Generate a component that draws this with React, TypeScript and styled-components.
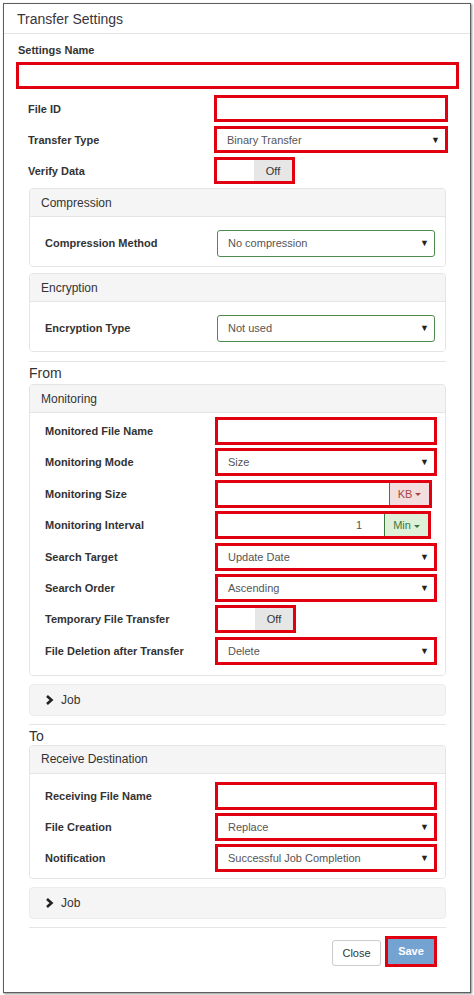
import React from 'react';
import styled, { createGlobalStyle } from 'styled-components';

const RED = '#e0000f';

const GlobalStyle = createGlobalStyle`
  html, body {
    margin: 0;
    padding: 0;
    background: #fff;
  }
  body {
    font-family: 'Liberation Sans', Arial, sans-serif;
    color: #333;
  }
  * {
    box-sizing: border-box;
  }
`;

const Caret: React.FC = () => <CaretShape />;

const Chevron: React.FC = () => (
  <svg width="9" height="10" viewBox="0 0 9 10">
    <polyline points="2,1 6.5,5 2,9" fill="none" stroke="#222" strokeWidth="2.6" />
  </svg>
);

const Select: React.FC<{ value: string }> = ({ value }) => (
  <SelectBox>
    <span>{value}</span>
    <Arrow>▼</Arrow>
  </SelectBox>
);

const Toggle: React.FC = () => (
  <Highlight $width={81}>
    <ToggleBlank />
    <ToggleOff>Off</ToggleOff>
  </Highlight>
);

const App: React.FC = () => {
  return (
    <>
      <GlobalStyle />
      <Frame>
        <Header>Transfer Settings</Header>
        <Body>
          <NameBlock>
            <NameLabel>Settings Name</NameLabel>
            <Highlight $height={27} />
          </NameBlock>

          <TopRows>
            <Row $label={186} $height={27}>
              <Label>File ID</Label>
              <Highlight />
            </Row>
            <Row $label={186} $height={27}>
              <Label>Transfer Type</Label>
              <Highlight>
                <Select value="Binary Transfer" />
              </Highlight>
            </Row>
            <Row $label={186} $height={27}>
              <Label>Verify Data</Label>
              <Toggle />
            </Row>
          </TopRows>

          <Sections>
            <Panel>
              <PanelHeader>Compression</PanelHeader>
              <PanelBody $top={12} $bottom={9}>
                <Row $label={170}>
                  <Label>Compression Method</Label>
                  <GreenSelect>
                    <Select value="No compression" />
                  </GreenSelect>
                </Row>
              </PanelBody>
            </Panel>

            <Panel>
              <PanelHeader>Encryption</PanelHeader>
              <PanelBody $top={12} $bottom={9}>
                <Row $label={170}>
                  <Label>Encryption Type</Label>
                  <GreenSelect>
                    <Select value="Not used" />
                  </GreenSelect>
                </Row>
              </PanelBody>
            </Panel>

            <Divider $top={3} />
            <SectionTitle $top={3} $bottom={3}>From</SectionTitle>

            <Panel $gap={8}>
              <PanelHeader>Monitoring</PanelHeader>
              <PanelBody $top={4} $bottom={10} $rowGap={3.4}>
                <Row $label={170}>
                  <Label>Monitored File Name</Label>
                  <Highlight />
                </Row>
                <Row $label={170}>
                  <Label>Monitoring Mode</Label>
                  <Highlight>
                    <Select value="Size" />
                  </Highlight>
                </Row>
                <Row $label={170}>
                  <Label>Monitoring Size</Label>
                  <Highlight $width={217}>
                    <TextValue />
                    <Addon $tone="danger" $width={40}>
                      KB <Caret />
                    </Addon>
                  </Highlight>
                </Row>
                <Row $label={170}>
                  <Label>Monitoring Interval</Label>
                  <Highlight $width={216}>
                    <TextValue>1</TextValue>
                    <Addon $tone="success" $width={44}>
                      Min <Caret />
                    </Addon>
                  </Highlight>
                </Row>
                <Row $label={170}>
                  <Label>Search Target</Label>
                  <Highlight>
                    <Select value="Update Date" />
                  </Highlight>
                </Row>
                <Row $label={170}>
                  <Label>Search Order</Label>
                  <Highlight>
                    <Select value="Ascending" />
                  </Highlight>
                </Row>
                <Row $label={170}>
                  <Label>Temporary File Transfer</Label>
                  <Toggle />
                </Row>
                <Row $label={170}>
                  <Label>File Deletion after Transfer</Label>
                  <Highlight>
                    <Select value="Delete" />
                  </Highlight>
                </Row>
              </PanelBody>
            </Panel>

            <JobBar>
              <Chevron />
              <span>Job</span>
            </JobBar>

            <Divider $top={0} />
            <SectionTitle $top={3} $bottom={1}>To</SectionTitle>

            <Panel $gap={8}>
              <PanelHeader>Receive Destination</PanelHeader>
              <PanelBody $top={8} $bottom={6} $rowGap={3}>
                <Row $label={170}>
                  <Label>Receiving File Name</Label>
                  <Highlight />
                </Row>
                <Row $label={170}>
                  <Label>File Creation</Label>
                  <Highlight>
                    <Select value="Replace" />
                  </Highlight>
                </Row>
                <Row $label={170}>
                  <Label>Notification</Label>
                  <Highlight>
                    <Select value="Successful Job Completion" />
                  </Highlight>
                </Row>
              </PanelBody>
            </Panel>

            <JobBar>
              <Chevron />
              <span>Job</span>
            </JobBar>

            <Divider $top={0} />

            <Footer>
              <CloseButton type="button">Close</CloseButton>
              <Highlight $width={52} $height={31}>
                <SaveButton type="button">Save</SaveButton>
              </Highlight>
            </Footer>
          </Sections>
        </Body>
      </Frame>
    </>
  );
};

export default App;

const Frame = styled.div`
  margin: 3px;
  width: 468px;
  height: 990px;
  border: 1px solid #5e5e5e;
  box-shadow: 1px 1px 2px rgba(0, 0, 0, 0.45);
  background: #fff;
  display: flex;
  flex-direction: column;
`;

const Header = styled.div`
  height: 30px;
  padding: 0 13px;
  display: flex;
  align-items: center;
  border-bottom: 1px solid #e5e5e5;
  font-size: 14px;
  color: #3a3440;
`;

const Body = styled.div`
  padding-top: 9px;
`;

const NameBlock = styled.div`
  padding: 0 11px 0 12px;
`;

const NameLabel = styled.div`
  padding-left: 2px;
  font-size: 11px;
  font-weight: bold;
  line-height: 14px;
  margin-bottom: 5px;
`;

const TopRows = styled.div`
  margin-top: 6px;
  padding: 0 22px 0 24px;
  display: flex;
  flex-direction: column;
  gap: 4px;
`;

const Row = styled.div<{ $label: number; $height?: number }>`
  display: grid;
  grid-template-columns: ${(p) => p.$label}px 1fr;
  align-items: center;
  height: ${(p) => p.$height ?? 28}px;
`;

const Label = styled.div`
  font-size: 11px;
  font-weight: bold;
  color: #333;
`;

const Highlight = styled.div<{ $width?: number; $height?: number }>`
  display: flex;
  align-items: stretch;
  width: ${(p) => (p.$width ? `${p.$width}px` : '100%')};
  height: ${(p) => (p.$height ? `${p.$height}px` : '100%')};
  border: 3px solid ${RED};
  background: #fff;
  overflow: hidden;
`;

const SelectBox = styled.div`
  flex: 1;
  display: flex;
  align-items: center;
  justify-content: space-between;
  padding: 0 5px 0 10px;
  font-size: 11px;
  color: #555;
`;

const Arrow = styled.span`
  font-size: 9px;
  color: #222;
`;

const GreenSelect = styled.div`
  display: flex;
  height: 27px;
  margin: 0 2px;
  border: 1px solid #4e8a4e;
  border-radius: 3px;
  background: #fff;
`;

const TextValue = styled.div`
  flex: 1;
  display: flex;
  align-items: center;
  justify-content: flex-end;
  padding-right: 22px;
  font-size: 11px;
  color: #555;
`;

const Addon = styled.div<{ $tone: 'danger' | 'success'; $width: number }>`
  width: ${(p) => p.$width}px;
  display: flex;
  align-items: center;
  justify-content: center;
  gap: 3px;
  font-size: 11px;
  background: ${(p) => (p.$tone === 'danger' ? '#f2dede' : '#dff0d8')};
  color: ${(p) => (p.$tone === 'danger' ? '#a94442' : '#3c763d')};
  border-left: 1px solid ${(p) => (p.$tone === 'danger' ? '#a94442' : '#3c763d')};
`;

const CaretShape = styled.span`
  display: inline-block;
  width: 0;
  height: 0;
  margin-top: 2px;
  border-left: 3px solid transparent;
  border-right: 3px solid transparent;
  border-top: 3px solid currentColor;
`;

const ToggleBlank = styled.div`
  flex: 1;
  background: #fff;
`;

const ToggleOff = styled.div`
  width: 38px;
  display: flex;
  align-items: center;
  justify-content: center;
  background: #e6e6e6;
  font-size: 11px;
  color: #333;
`;

const Sections = styled.div`
  margin-top: 4px;
  padding: 0 24px 0 25px;
  display: flex;
  flex-direction: column;
`;

const Panel = styled.div<{ $gap?: number }>`
  border: 1px solid #e4e4e4;
  border-radius: 4px;
  margin-bottom: ${(p) => p.$gap ?? 6}px;
  overflow: hidden;
`;

const PanelHeader = styled.div`
  height: 28px;
  padding-left: 11px;
  display: flex;
  align-items: center;
  background: #f5f5f5;
  border-bottom: 1px solid #e4e4e4;
  font-size: 12px;
  color: #333;
`;

const PanelBody = styled.div<{ $top: number; $bottom: number; $rowGap?: number }>`
  display: flex;
  flex-direction: column;
  gap: ${(p) => p.$rowGap ?? 0}px;
  padding: ${(p) => p.$top}px 8px ${(p) => p.$bottom}px 15px;
  background: #fff;
`;

const Divider = styled.div<{ $top: number }>`
  height: 1px;
  margin-top: ${(p) => p.$top}px;
  background: #e5e5e5;
`;

const SectionTitle = styled.div<{ $top: number; $bottom: number }>`
  margin: ${(p) => p.$top}px 0 ${(p) => p.$bottom}px;
  font-size: 14px;
  line-height: 16px;
  color: #333;
`;

const JobBar = styled.div`
  height: 32px;
  margin-bottom: 8px;
  padding-left: 15px;
  display: flex;
  align-items: center;
  gap: 7px;
  background: #f5f5f5;
  border: 1px solid #ececec;
  border-radius: 4px;
  font-size: 12px;
  color: #333;
`;

const Footer = styled.div`
  display: flex;
  justify-content: flex-end;
  align-items: flex-start;
  gap: 4px;
  padding: 8px 9px 0 0;
`;

const CloseButton = styled.button`
  width: 49px;
  height: 26px;
  margin-top: 4px;
  padding: 0;
  border: 1px solid #ccc;
  border-radius: 3px;
  background: #fff;
  font-family: inherit;
  font-size: 11px;
  color: #333;
`;

const SaveButton = styled.button`
  flex: 1;
  padding: 0;
  border: none;
  background: #74a3d2;
  font-family: inherit;
  font-size: 11px;
  font-weight: bold;
  color: #fff;
`;
